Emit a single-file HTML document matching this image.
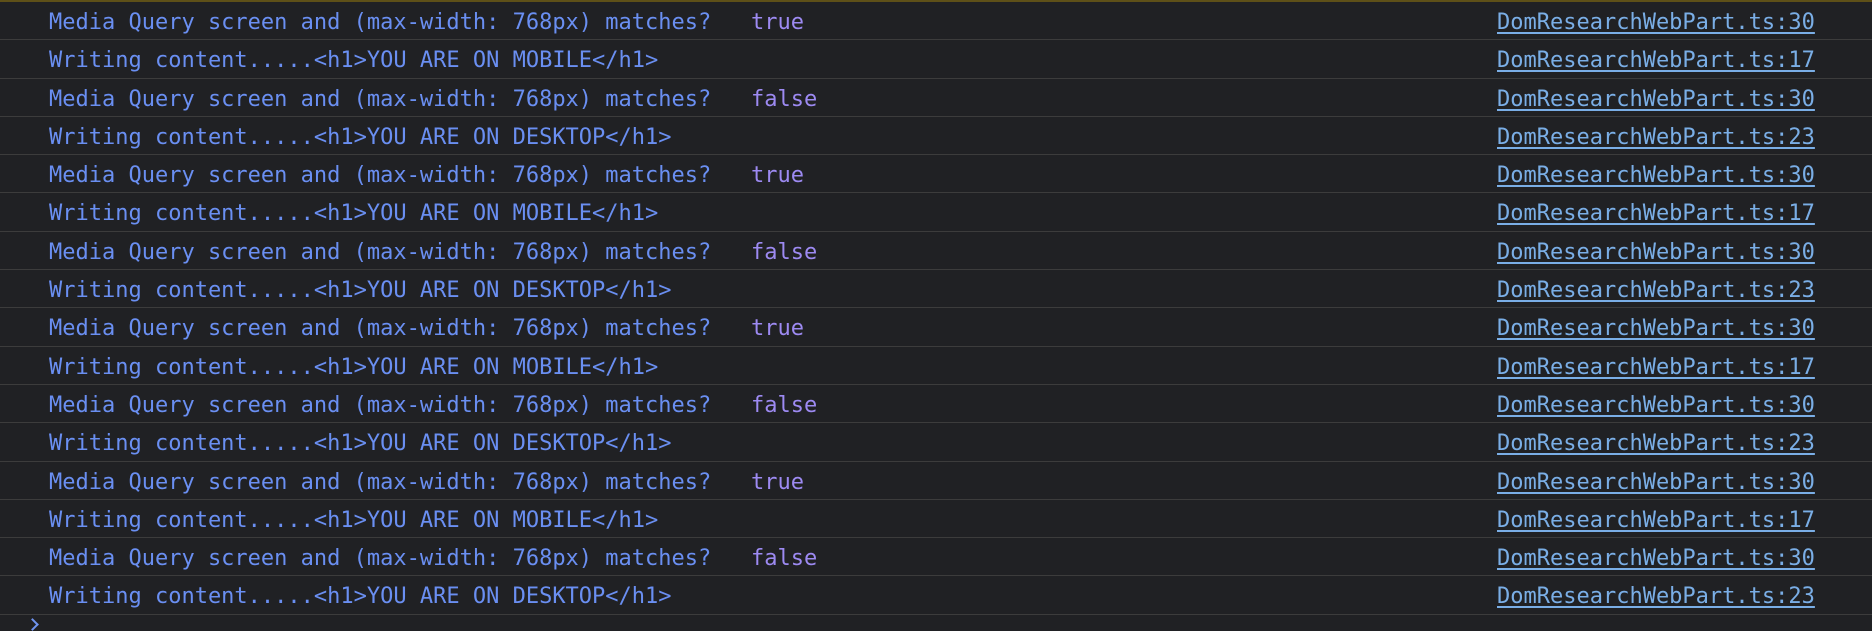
<!DOCTYPE html>
<html><head><meta charset="utf-8"><style>
html,body{margin:0;padding:0;background:#202124;width:1872px;height:630px;overflow:hidden}
.top{height:2px;background:#5e5018}
.row{position:relative;height:37.3px;border-bottom:1px solid #3c3c3c;font-family:"DejaVu Sans Mono","Liberation Mono",monospace;font-size:22px;line-height:38px;white-space:pre;color:#6a8ff2}
.row span.t{position:absolute;left:49px;top:2px}
.v{color:#9d8af2}
.row a{position:absolute;left:1497px;top:2px;color:#7aaee6;text-decoration:underline;text-underline-offset:3px}
.car{position:absolute;left:28px;top:620px;width:7px;height:7px;border-right:2px solid #6f94f0;border-top:2px solid #6f94f0;transform:rotate(45deg)}
</style></head><body>
<div class="top"></div>
<div class="row"><span class="t">Media Query screen and (max-width: 768px) matches?   <span class="v">true</span></span><a>DomResearchWebPart.ts:30</a></div>
<div class="row"><span class="t">Writing content.....&lt;h1&gt;YOU ARE ON MOBILE&lt;/h1&gt;</span><a>DomResearchWebPart.ts:17</a></div>
<div class="row"><span class="t">Media Query screen and (max-width: 768px) matches?   <span class="v">false</span></span><a>DomResearchWebPart.ts:30</a></div>
<div class="row"><span class="t">Writing content.....&lt;h1&gt;YOU ARE ON DESKTOP&lt;/h1&gt;</span><a>DomResearchWebPart.ts:23</a></div>
<div class="row"><span class="t">Media Query screen and (max-width: 768px) matches?   <span class="v">true</span></span><a>DomResearchWebPart.ts:30</a></div>
<div class="row"><span class="t">Writing content.....&lt;h1&gt;YOU ARE ON MOBILE&lt;/h1&gt;</span><a>DomResearchWebPart.ts:17</a></div>
<div class="row"><span class="t">Media Query screen and (max-width: 768px) matches?   <span class="v">false</span></span><a>DomResearchWebPart.ts:30</a></div>
<div class="row"><span class="t">Writing content.....&lt;h1&gt;YOU ARE ON DESKTOP&lt;/h1&gt;</span><a>DomResearchWebPart.ts:23</a></div>
<div class="row"><span class="t">Media Query screen and (max-width: 768px) matches?   <span class="v">true</span></span><a>DomResearchWebPart.ts:30</a></div>
<div class="row"><span class="t">Writing content.....&lt;h1&gt;YOU ARE ON MOBILE&lt;/h1&gt;</span><a>DomResearchWebPart.ts:17</a></div>
<div class="row"><span class="t">Media Query screen and (max-width: 768px) matches?   <span class="v">false</span></span><a>DomResearchWebPart.ts:30</a></div>
<div class="row"><span class="t">Writing content.....&lt;h1&gt;YOU ARE ON DESKTOP&lt;/h1&gt;</span><a>DomResearchWebPart.ts:23</a></div>
<div class="row"><span class="t">Media Query screen and (max-width: 768px) matches?   <span class="v">true</span></span><a>DomResearchWebPart.ts:30</a></div>
<div class="row"><span class="t">Writing content.....&lt;h1&gt;YOU ARE ON MOBILE&lt;/h1&gt;</span><a>DomResearchWebPart.ts:17</a></div>
<div class="row"><span class="t">Media Query screen and (max-width: 768px) matches?   <span class="v">false</span></span><a>DomResearchWebPart.ts:30</a></div>
<div class="row"><span class="t">Writing content.....&lt;h1&gt;YOU ARE ON DESKTOP&lt;/h1&gt;</span><a>DomResearchWebPart.ts:23</a></div>
<div class="car"></div>
</body></html>
